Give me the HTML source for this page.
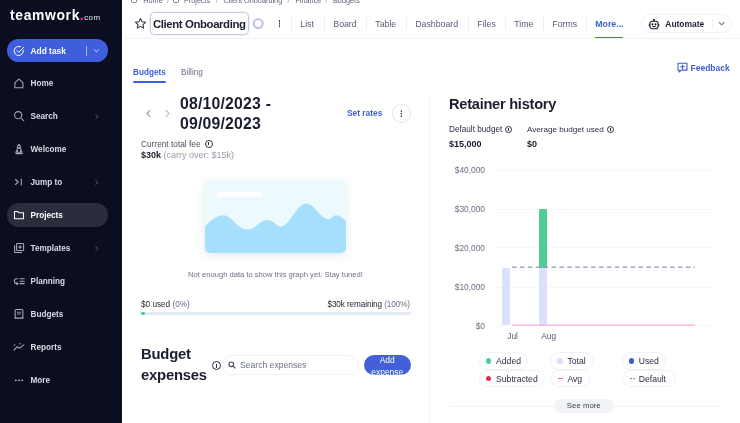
<!DOCTYPE html>
<html><head><meta charset="utf-8"><title>Budgets - Client Onboarding</title>
<style>
*{box-sizing:border-box;margin:0;padding:0}
html,body{width:740px;height:423px;overflow:hidden;background:#fff;font-family:"Liberation Sans",sans-serif;color:#0b0e1f}
.abs{position:absolute}
#side{position:absolute;left:0;top:0;width:122px;height:423px;background:#0b0e1f}
#main{position:absolute;left:122px;top:0;width:618px;height:423px;background:#fff}
.nav{position:absolute;left:7px;width:101px;height:24px;border-radius:12px;color:#d9dce6;font-size:8.2px;font-weight:bold;line-height:26px;padding-left:23.5px;white-space:nowrap}
.nav.act{background:#2a2d3c;color:#fff}
.nav svg.ic{position:absolute;left:5.7px;top:6px;width:12px;height:12px;stroke:#a6abc2;fill:none;stroke-width:1.05;stroke-linecap:round;stroke-linejoin:round}
.nav svg.ch{position:absolute;left:85.5px;top:8.7px;width:7px;height:7px;stroke:#646a82;fill:none;stroke-width:.9;stroke-linecap:round;stroke-linejoin:round}
.t{position:absolute;white-space:nowrap}
.tab{position:absolute;top:19px;font-size:8.750px;color:#585d76;margin-left:.3px;white-space:nowrap;line-height:10px}
.vd{position:absolute;top:17px;width:1px;height:13px;background:#eceef4;margin-left:.8px}
.pill{position:absolute;height:17.800px;border:1px solid #f0f1f5;border-radius:9px;font-size:8.600px;line-height:17px;color:#2b2f40;white-space:nowrap;padding-left:16.100px;background:#fff}
.pill i{position:absolute;left:6px;top:5.400px;width:5.200px;height:5.200px;border-radius:50%}
.yl{position:absolute;left:440px;width:45px;text-align:right;font-size:8.4px;color:#6a7085;line-height:10px}
.gl{position:absolute;left:493px;width:220px;height:1px;background:#f5f6f9}
</style></head><body><div id="root" style="position:absolute;left:0;top:0;width:740px;height:423px;will-change:transform">
<div id="side">
  <div class="t" style="left:10px;top:4.800px;font-size:13.900px;font-weight:bold;color:#fff;letter-spacing:.65px;line-height:20px">teamwork<span style="color:#ff22b1;letter-spacing:0;margin-left:-.3px">.</span><span style="font-size:7.900px;font-weight:normal;letter-spacing:.45px;color:#e8eaf2;margin-left:.6px">com</span></div>
  <div class="abs" style="left:7px;top:38.5px;width:100.5px;height:23.5px;border-radius:12px;background:#3f5edb"></div>
  <svg class="abs" style="left:12.600px;top:44.700px" width="12" height="12" viewBox="0 0 12 12" fill="none" stroke="#fff" stroke-width="1" stroke-linecap="round" stroke-linejoin="round"><path d="M10.3 5.2A4.6 4.6 0 1 1 7.6 1.7"/><path d="M4 5.6l1.8 1.8L10.6 2.4"/></svg>
  <div class="t" style="left:30.5px;top:46px;font-size:8.4px;font-weight:bold;color:#fff;line-height:10px">Add task</div>
  <div class="abs" style="left:86px;top:46px;width:1px;height:9.5px;background:#a9b6ee"></div>
  <svg class="abs" style="left:92.7px;top:48px" width="7" height="6" viewBox="0 0 7 6" fill="none" stroke="#e6eaff" stroke-width=".9" stroke-linecap="round" stroke-linejoin="round"><path d="M1.5 1.7l2 2 2-2"/></svg>

  <div class="nav" style="top:71px"><svg class="ic" viewBox="0 0 12 12"><path d="M1.900 5.700L5.900 2.100l4 3.600v5H1.900z"/></svg>Home</div>
  <div class="nav" style="top:104px"><svg class="ic" viewBox="0 0 12 12"><circle cx="5.2" cy="5.2" r="3.6"/><path d="M8 8l2.8 2.8"/></svg>Search<svg class="ch" viewBox="0 0 7 7"><path d="M2.8 1.5l2 2-2 2"/></svg></div>
  <div class="nav" style="top:137px"><svg class="ic" viewBox="0 0 12 12"><path d="M6 1.300c1.400 1.200 1.800 2.800 1.800 4.400v3.500H4.200V5.700C4.200 4.100 4.600 2.500 6 1.300z"/><path d="M4.200 7.300L3 8.900v1.700h6V8.900L7.800 7.300"/><circle cx="6" cy="5" r=".5"/></svg>Welcome</div>
  <div class="nav" style="top:170px"><svg class="ic" viewBox="0 0 12 12"><path d="M2.500 3.500L5.200 6 2.500 8.500M8.300 3v6"/></svg>Jump to<svg class="ch" viewBox="0 0 7 7"><path d="M2.8 1.5l2 2-2 2"/></svg></div>
  <div class="nav act" style="top:203px"><svg class="ic" style="stroke:#fff" viewBox="0 0 12 12"><path d="M1.500 2.500h3.200l1.200 1.300h4.600v5.900h-9z"/></svg>Projects</div>
  <div class="nav" style="top:236px"><svg class="ic" viewBox="0 0 12 12"><rect x="3.600" y="1.500" width="7" height="7" rx=".8"/><path d="M1.600 3.600v6.900h6.900M7.100 3.500v3M5.600 5h3"/></svg>Templates<svg class="ch" viewBox="0 0 7 7"><path d="M2.8 1.5l2 2-2 2"/></svg></div>
  <div class="nav" style="top:269px"><svg class="ic" viewBox="0 0 12 12"><path d="M7 3.700h4.300M7 6.150h4.300M7 8.600h4.300M4.700 3.700H3.800a2.450 2.450 0 0 0 0 4.900h1M3.900 7.500l1.100 1.100-1.100 1.100"/></svg>Planning</div>
  <div class="nav" style="top:302px"><svg class="ic" viewBox="0 0 12 12"><path d="M2.100 10.500V2.400a.9.900 0 0 1 .9-.9h6a.9.900 0 0 1 .9.900v8.100l-1.300-.7-1.300.7-1.300-.7-1.300.7-1.300-.7z"/><path d="M4.300 4.200h3.400M4.300 6h3.400" stroke-width=".8"/></svg>Budgets</div>
  <div class="nav" style="top:335px"><svg class="ic" viewBox="0 0 12 12"><path d="M1 9.100L4.200 5.700l2.200 1.500 4.500-3.300"/><path d="M1.600 3.900v.01M7.200 2.700v.01" stroke-width="1.500"/></svg>Reports</div>
  <div class="nav" style="top:368px"><svg class="ic" viewBox="0 0 12 12" style="fill:#c9cddb;stroke:none"><circle cx="2.900" cy="6.300" r=".85"/><circle cx="6" cy="6.300" r=".85"/><circle cx="9.100" cy="6.300" r=".85"/></svg>More</div>
</div>

<div id="main">
  <!-- breadcrumb (clipped at top) -->
  <div class="abs" style="left:0;top:-4px;font-size:7.300px;color:#5d6277;line-height:10px"><span class="t" style="left:21.3px;top:0">Home</span><span class="t" style="left:62px;top:0">Projects</span><span class="t" style="left:101.4px;top:0">Client Onboarding</span><span class="t" style="left:173.4px;top:0">Finance</span><span class="t" style="left:211px;top:0">Budgets</span><span class="t" style="left:44.9px;top:0;color:#9a9fb2">/</span><span class="t" style="left:94px;top:0;color:#9a9fb2">/</span><span class="t" style="left:165.4px;top:0;color:#9a9fb2">/</span><span class="t" style="left:203.3px;top:0;color:#9a9fb2">/</span><span class="abs" style="left:9px;top:.5px;width:6px;height:6px;border:1px solid #7d8296;border-radius:1.500px"></span><span class="abs" style="left:51px;top:.5px;width:6px;height:6px;border:1px solid #7d8296;border-radius:1.500px"></span></div>

  <!-- header -->
  <svg class="abs" style="left:11.700px;top:17px" width="13" height="13" viewBox="0 0 12 12" fill="none" stroke="#2b2f40" stroke-width=".95" stroke-linejoin="round"><path d="M6 1.300l1.450 3.050 3.300.400-2.450 2.250.650 3.300L6 8.650 3.050 10.300l.650-3.300L1.250 4.750l3.300-.400z"/></svg>
  <div class="abs" style="left:28.300px;top:12.400px;width:98.500px;height:22.900px;border:1px solid #c5cbe0;border-radius:4.500px;box-shadow:0 0 0 .500px #e6e8f3"></div>
  <div class="t" style="left:31px;top:16.500px;font-size:11.400px;font-weight:bold;color:#1b1e2e;line-height:14px;letter-spacing:-.4px">Client Onboarding</div>
  <svg class="abs" style="left:129px;top:16px" width="15" height="15" viewBox="0 0 15 15"><circle cx="7.200" cy="7.600" r="4.500" fill="none" stroke="#b7c0e6" stroke-width="1.900"/></svg>
  <div class="abs" style="left:156.500px;top:20px;width:1.600px;height:1.600px;background:#444;box-shadow:0 2.600px 0 #444,0 5.200px 0 #444"></div>
  <div class="vd" style="left:168px"></div>
  <div class="tab" style="left:178px">List</div>
  <div class="vd" style="left:201px"></div>
  <div class="tab" style="left:211px">Board</div>
  <div class="vd" style="left:243px"></div>
  <div class="tab" style="left:253px">Table</div>
  <div class="vd" style="left:283px"></div>
  <div class="tab" style="left:293px">Dashboard</div>
  <div class="vd" style="left:345px"></div>
  <div class="tab" style="left:355px">Files</div>
  <div class="vd" style="left:382px"></div>
  <div class="tab" style="left:392px">Time</div>
  <div class="vd" style="left:420px"></div>
  <div class="tab" style="left:430px">Forms</div>
  <div class="vd" style="left:463px"></div>
  <div class="tab" style="left:473px;color:#4160d7;font-weight:bold">More...</div>
  <div class="abs" style="left:473px;top:36.600px;width:28px;height:1.500px;background:#4866dd;border-radius:1px"></div>
  <div class="abs" style="left:2px;top:38px;width:616px;height:1px;background:#f2f3f7"></div>
  <!-- automate -->
  <div class="abs" style="left:519px;top:14px;width:91px;height:19.200px;border:1px solid #f0f1f6;border-radius:9.600px"></div>
  <svg class="abs" style="left:526px;top:17.500px" width="12" height="12" viewBox="0 0 12 12" fill="none" stroke="#1b1e2e" stroke-width="1.050" stroke-linecap="round" stroke-linejoin="round"><rect x="2" y="3.200" width="8" height="7.600" rx="2.300"/><path d="M6 3.200V1.900M1.300 6.300v1.600M10.700 6.300v1.600"/><circle cx="6" cy="1.700" r=".45" fill="#1b1e2e"/><circle cx="4.500" cy="6.200" r=".45" fill="#1b1e2e"/><circle cx="7.500" cy="6.200" r=".45" fill="#1b1e2e"/><path d="M4.700 8.100c.7.700 1.900.7 2.600 0"/></svg>
  <div class="t" style="left:543.300px;top:19px;font-size:8.450px;font-weight:bold;color:#1f2232;line-height:10px">Automate</div>
  <div class="abs" style="left:590px;top:18.500px;width:1px;height:10.500px;background:#f0f1f6"></div>
  <svg class="abs" style="left:596px;top:21px" width="7" height="6" viewBox="0 0 7 6" fill="none" stroke="#333" stroke-width="1" stroke-linecap="round" stroke-linejoin="round"><path d="M1.200 1.600l2.400 2.300L6 1.600"/></svg>

  <!-- sub tabs -->
  <div class="t" style="left:11px;top:67.500px;font-size:8.200px;font-weight:bold;color:#4160d7;line-height:10px">Budgets</div>
  <div class="abs" style="left:11px;top:81.200px;width:33px;height:1.600px;background:#3f5edb;border-radius:1px"></div>
  <div class="t" style="left:59px;top:67.500px;font-size:8.200px;color:#6a7085;line-height:10px">Billing</div>
  <!-- feedback -->
  <svg class="abs" style="left:555.200px;top:61.700px" width="11" height="11" viewBox="0 0 11 11" fill="none" stroke="#3f5bd4" stroke-width="1.100" stroke-linejoin="round" stroke-linecap="round"><path d="M1 1.300h9v6.800H4.300L2.200 10V8.100H1z"/><path d="M5.500 3v3.400M3.800 4.700h3.400"/></svg>
  <div class="t" style="left:568.500px;top:62.600px;font-size:8.500px;font-weight:bold;color:#4261d8;line-height:10px">Feedback</div>

  <!-- date -->
  <svg class="abs" style="left:23.300px;top:108.500px" width="7" height="9" viewBox="0 0 7 9" fill="none" stroke="#555a6e" stroke-width="1" stroke-linecap="round" stroke-linejoin="round"><path d="M4.800 1.500L2 4.500l2.800 3"/></svg>
  <svg class="abs" style="left:41.700px;top:108.500px" width="7" height="9" viewBox="0 0 7 9" fill="none" stroke="#8a92b0" stroke-width="1" stroke-linecap="round" stroke-linejoin="round"><path d="M2.200 1.500L5 4.500l-2.800 3"/></svg>
  <div class="t" style="left:58px;top:94.300px;font-size:15.800px;font-weight:bold;color:#1b1e2e;line-height:20px;letter-spacing:.2px">08/10/2023 -<br>09/09/2023</div>
  <div class="t" style="left:225px;top:108px;font-size:8.400px;font-weight:bold;color:#4160d7;line-height:10px">Set rates</div>
  <div class="abs" style="left:269.600px;top:103.900px;width:19.400px;height:19.400px;border:1px solid #e2e5f3;border-radius:50%"></div>
  <svg class="abs" style="left:275px;top:108px" width="9" height="12" viewBox="0 0 9 12"><circle cx="4.300" cy="3.100" r=".8" fill="#2b2f40"/><circle cx="4.300" cy="5.600" r=".8" fill="#2b2f40"/><circle cx="4.300" cy="8.100" r=".8" fill="#2b2f40"/></svg>

  <div class="t" style="left:19px;top:138.700px;font-size:8.300px;color:#4a4e5e;line-height:10px">Current total fee</div>
  <div class="abs" style="left:82.600px;top:139.600px;width:8px;height:8px;border:1px solid #2b2f40;border-radius:50%"></div>
  <div class="abs" style="left:86.100px;top:141.800px;width:1px;height:3.600px;background:#2b2f40"></div>
  <div class="t" style="left:19px;top:150.200px;font-size:9px;color:#999ba6;line-height:10px"><b style="color:#1b1e2e">$30k</b> (carry over: $15k)</div>

  <!-- illustration -->
  <div class="abs" style="left:83px;top:180.300px;width:141px;height:73px;border-radius:5px;background:#ecf9fd;box-shadow:0 2px 8px rgba(90,110,140,.16);overflow:hidden">
    <div class="abs" style="left:12px;top:11.500px;width:45px;height:5.500px;border-radius:2px;background:#fff"></div>
    <svg class="abs" style="left:0;top:0" width="141" height="73" viewBox="0 0 141 73"><path d="M0 46.500C6 40 12 35.200 18.200 35.200 27 35.200 32 49.600 43 49.600 51 49.600 55 40 62 40 69 40 71 46.500 76 46.500 84 46.500 92 23.400 101.400 23.400 109 23.400 116 39 123.400 39 127 39 128 35.200 131.200 35.200 135 35.200 138 38.500 141 41.400V73H0z" fill="#a5dffb"/></svg>
  </div>
  <div class="t" style="left:0;width:307px;top:269.500px;text-align:center;font-size:7.600px;color:#6c7186;line-height:10px">Not enough data to show this graph yet. Stay tuned!</div>

  <div class="t" style="left:19px;top:299.500px;font-size:8.200px;color:#1b1e2e;line-height:10px">$0 used <span style="color:#6a7085">(0%)</span></div>
  <div class="t" style="right:330px;top:299.500px;font-size:8.200px;letter-spacing:-.1px;color:#1b1e2e;line-height:10px">$30k remaining <span style="color:#6a7085">(100%)</span></div>
  <div class="abs" style="left:19px;top:312px;width:270px;height:3px;border-radius:2px;background:#e4e8f1"></div>
  <div class="abs" style="left:19px;top:311.700px;width:3.600px;height:3.600px;border-radius:2px;background:#45c98f"></div>

  <div class="t" style="left:19px;top:344px;font-size:14.800px;font-weight:bold;color:#1b1e2e;line-height:21.300px;letter-spacing:-.2px">Budget<br>expenses</div>
  <div class="abs" style="left:90px;top:361px;width:9px;height:9px;border:1.100px solid #2b2f40;border-radius:50%"></div>
  <div class="abs" style="left:94px;top:363.500px;width:1.100px;height:4px;background:#2b2f40"></div>
  <div class="abs" style="left:100px;top:355px;width:137px;height:19.500px;border:1px solid #f1f2f7;border-radius:10px"></div>
  <svg class="abs" style="left:106px;top:360.500px" width="8" height="8" viewBox="0 0 8 8" fill="none" stroke="#4a4e5e" stroke-width="1.100" stroke-linecap="round"><circle cx="3.300" cy="3.300" r="2.300"/><path d="M5.200 5.200L7 7"/></svg>
  <div class="t" style="left:118px;top:360px;font-size:8.600px;color:#6a7085;line-height:10px">Search expenses</div>
  <div class="abs" style="left:241.500px;top:355.400px;width:47.500px;height:19.300px;border-radius:10px;background:#4360d9;overflow:hidden;color:#fff;font-size:8.500px;line-height:12.100px;text-align:center"><div style="margin-top:-1.800px">Add<br>expense</div></div>

  <!-- divider between panels -->
  <div class="abs" style="left:307.300px;top:93.500px;width:1px;height:330px;background:#f6f7fa"></div>

  <!-- right -->
  <div class="t" style="left:327px;top:95.300px;font-size:14.600px;font-weight:bold;color:#1b1e2e;line-height:18px;letter-spacing:-.25px">Retainer history</div>
  <div class="t" style="left:327px;top:125px;font-size:8.200px;color:#2b2f40;line-height:10px">Default budget</div>
  <div class="abs" style="left:382.800px;top:126.300px;width:7px;height:7px;border:.900px solid #2b2f40;border-radius:50%"></div>
  <div class="abs" style="left:385.850px;top:128.100px;width:.900px;height:3.200px;background:#2b2f40"></div>
  <div class="t" style="left:327px;top:139px;font-size:9px;font-weight:bold;color:#1b1e2e;line-height:10px">$15,000</div>
  <div class="t" style="left:405px;top:125px;font-size:8.100px;color:#2b2f40;line-height:10px">Average budget used</div>
  <div class="abs" style="left:484.500px;top:126.300px;width:7px;height:7px;border:.900px solid #2b2f40;border-radius:50%"></div>
  <div class="abs" style="left:487.550px;top:128.100px;width:.900px;height:3.200px;background:#2b2f40"></div>
  <div class="t" style="left:405px;top:139px;font-size:9px;font-weight:bold;color:#1b1e2e;line-height:10px">$0</div>
</div>

<!-- chart: page coordinates -->
<div class="yl" style="top:165px">$40,000</div>
<div class="yl" style="top:203.500px">$30,000</div>
<div class="yl" style="top:242.500px">$20,000</div>
<div class="yl" style="top:281.500px">$10,000</div>
<div class="yl" style="top:320.500px">$0</div>
<div class="gl" style="top:169.500px"></div>
<div class="gl" style="top:208.500px"></div>
<div class="gl" style="top:247px"></div>
<div class="gl" style="top:286.500px"></div>
<div class="gl" style="top:325px"></div>
<div class="abs" style="left:502px;top:268px;width:8.200px;height:57.300px;background:#dbe0fc;border-radius:1.800px"></div>
<div class="abs" style="left:538.500px;top:268px;width:8.200px;height:57.300px;background:#dbe0fc;border-radius:0 0 1.800px 1.800px"></div>
<div class="abs" style="left:538.500px;top:209px;width:8.200px;height:59px;background:#4ecd97;border-radius:1.500px 1.500px 0 0"></div>
<svg class="abs" style="left:510px;top:264px" width="190" height="64" viewBox="0 0 190 64"><path d="M2 3.200H185" stroke="#8b98b6" stroke-width="1.300" stroke-dasharray="4.700 3.200" fill="none"/><path d="M2 61.100H185" stroke="#ff7ccb" stroke-width=".8" fill="none"/></svg>
<div class="t" style="left:507.300px;top:330.800px;font-size:8.300px;color:#555b70;line-height:10px">Jul</div>
<div class="t" style="left:541.300px;top:330.800px;font-size:8.300px;color:#555b70;line-height:10px">Aug</div>

<div class="pill" style="left:479px;top:352px;width:49.400px"><i style="background:#4ecd97"></i>Added</div>
<div class="pill" style="left:550.400px;top:352px;width:43.600px"><i style="background:#dbe0fc"></i>Total</div>
<div class="pill" style="left:621.700px;top:352px;width:44.300px"><i style="background:#3f5bd4"></i>Used</div>
<div class="pill" style="left:479px;top:369.600px;width:66.400px"><i style="background:#e12d42"></i>Subtracted</div>
<div class="pill" style="left:550.400px;top:369.600px;width:39.200px"><i style="background:#ff5ab8;height:1.200px;border-radius:0;top:7.600px;width:5px;left:7px"></i>Avg</div>
<div class="pill" style="left:621.700px;top:369.600px;width:54px"><i style="background:linear-gradient(90deg,#8d93a8 0 2px,transparent 2px 3.200px,#8d93a8 3.200px 5.200px);width:5.200px;height:1.200px;top:7.600px;left:7.500px;border-radius:0"></i>Default</div>

<div class="abs" style="left:449px;top:405.500px;width:271px;height:1px;background:#eff0f5"></div>
<div class="abs" style="left:554px;top:399px;width:59.500px;height:14px;border-radius:7px;background:#f1f3f7;font-size:7.800px;line-height:14px;text-align:center;color:#3a3f52">See more</div>
</div></body></html>
